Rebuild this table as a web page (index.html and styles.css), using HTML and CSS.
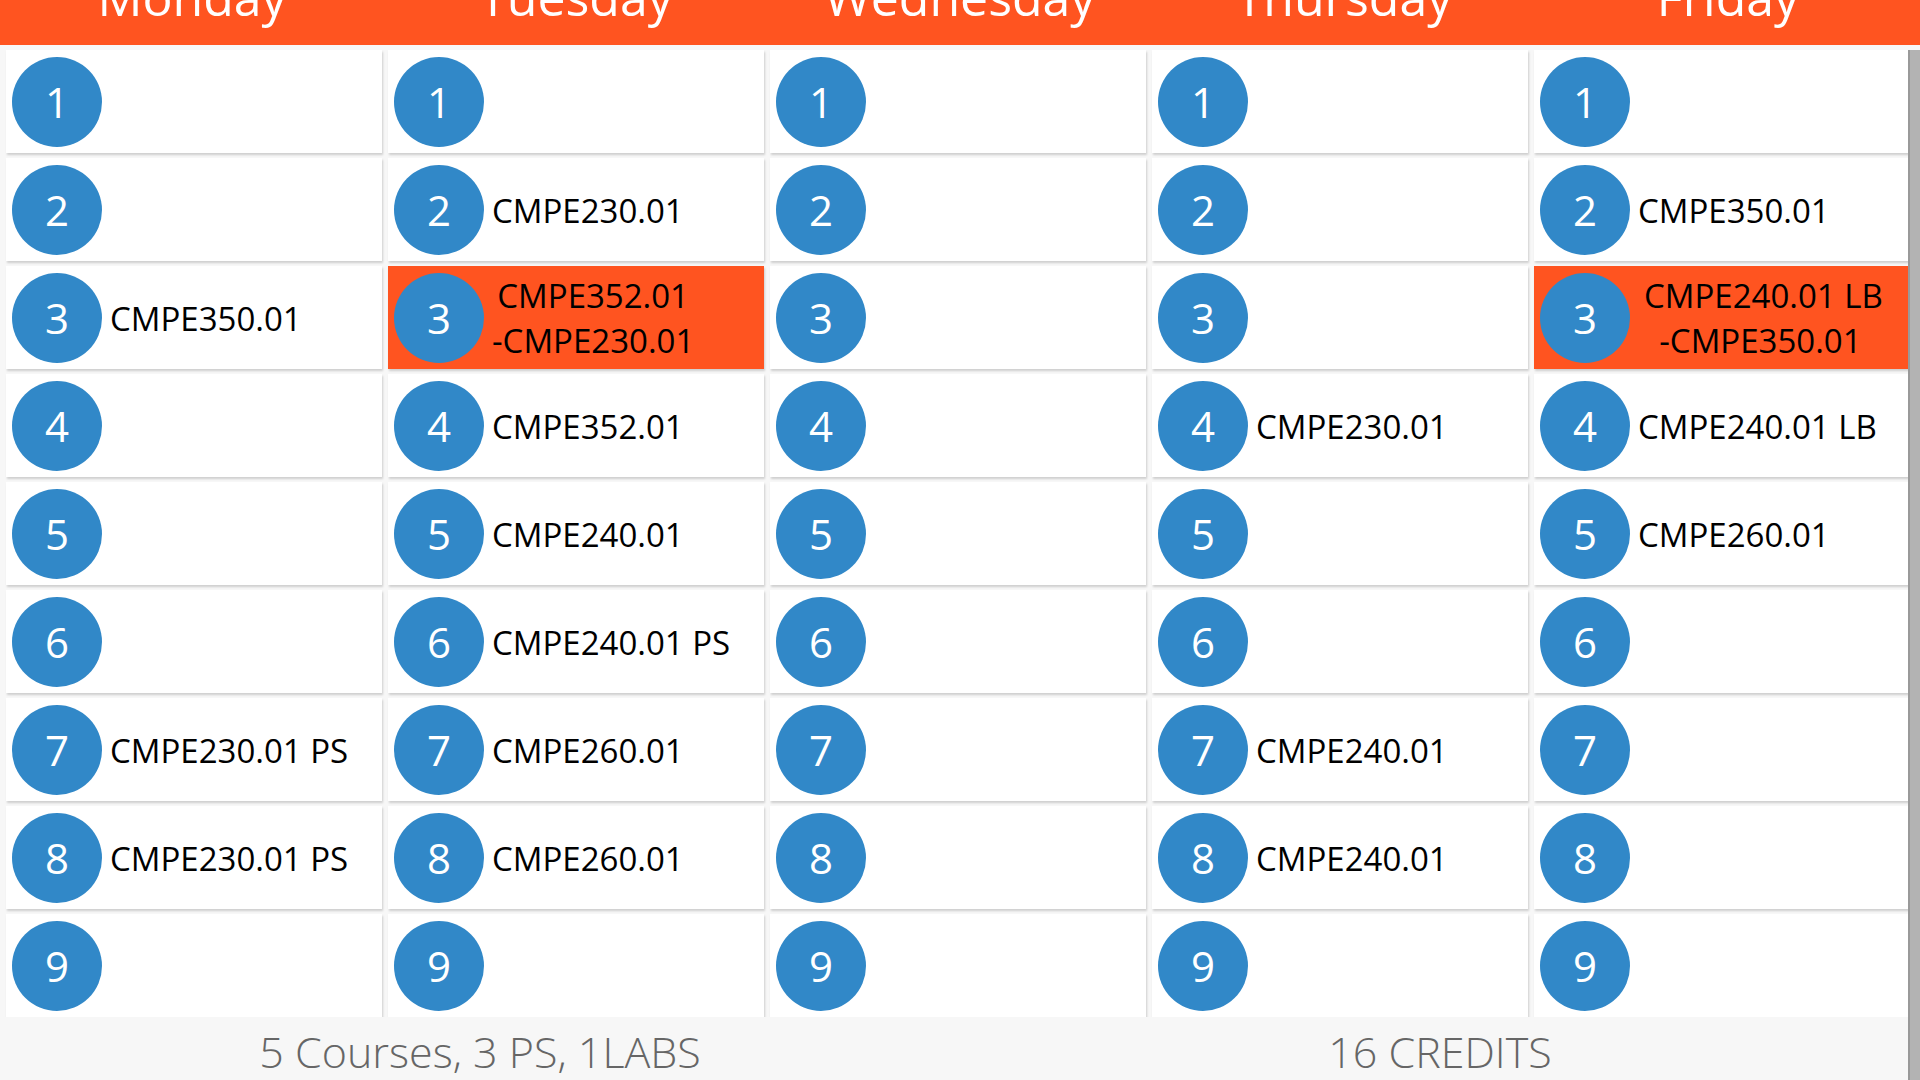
FILE: index.html
```html
<!DOCTYPE html>
<html>
<head>
<meta charset="utf-8">
<link rel="stylesheet" href="styles.css">
</head>
<body>
<div class="app">
  <div class="header">
    <div class="day">Monday</div>
    <div class="day">Tuesday</div>
    <div class="day">Wednesday</div>
    <div class="day">Thursday</div>
    <div class="day">Friday</div>
  </div>
  <div class="grid">
    <div class="col">
      <div class="cell"><span class="num">1</span></div>
      <div class="cell"><span class="num">2</span></div>
      <div class="cell"><span class="num">3</span><span class="course">CMPE350.01</span></div>
      <div class="cell"><span class="num">4</span></div>
      <div class="cell"><span class="num">5</span></div>
      <div class="cell"><span class="num">6</span></div>
      <div class="cell"><span class="num">7</span><span class="course">CMPE230.01 PS</span></div>
      <div class="cell"><span class="num">8</span><span class="course">CMPE230.01 PS</span></div>
      <div class="cell"><span class="num">9</span></div>
    </div>
    <div class="col">
      <div class="cell"><span class="num">1</span></div>
      <div class="cell"><span class="num">2</span><span class="course">CMPE230.01</span></div>
      <div class="cell conflict"><span class="num">3</span><span class="course">CMPE352.01<br>-CMPE230.01</span></div>
      <div class="cell"><span class="num">4</span><span class="course">CMPE352.01</span></div>
      <div class="cell"><span class="num">5</span><span class="course">CMPE240.01</span></div>
      <div class="cell"><span class="num">6</span><span class="course">CMPE240.01 PS</span></div>
      <div class="cell"><span class="num">7</span><span class="course">CMPE260.01</span></div>
      <div class="cell"><span class="num">8</span><span class="course">CMPE260.01</span></div>
      <div class="cell"><span class="num">9</span></div>
    </div>
    <div class="col">
      <div class="cell"><span class="num">1</span></div>
      <div class="cell"><span class="num">2</span></div>
      <div class="cell"><span class="num">3</span></div>
      <div class="cell"><span class="num">4</span></div>
      <div class="cell"><span class="num">5</span></div>
      <div class="cell"><span class="num">6</span></div>
      <div class="cell"><span class="num">7</span></div>
      <div class="cell"><span class="num">8</span></div>
      <div class="cell"><span class="num">9</span></div>
    </div>
    <div class="col">
      <div class="cell"><span class="num">1</span></div>
      <div class="cell"><span class="num">2</span></div>
      <div class="cell"><span class="num">3</span></div>
      <div class="cell"><span class="num">4</span><span class="course">CMPE230.01</span></div>
      <div class="cell"><span class="num">5</span></div>
      <div class="cell"><span class="num">6</span></div>
      <div class="cell"><span class="num">7</span><span class="course">CMPE240.01</span></div>
      <div class="cell"><span class="num">8</span><span class="course">CMPE240.01</span></div>
      <div class="cell"><span class="num">9</span></div>
    </div>
    <div class="col">
      <div class="cell"><span class="num">1</span></div>
      <div class="cell"><span class="num">2</span><span class="course">CMPE350.01</span></div>
      <div class="cell conflict"><span class="num">3</span><span class="course"><span class="lead"></span>CMPE240.01 LB<br>-CMPE350.01</span></div>
      <div class="cell"><span class="num">4</span><span class="course">CMPE240.01 LB</span></div>
      <div class="cell"><span class="num">5</span><span class="course">CMPE260.01</span></div>
      <div class="cell"><span class="num">6</span></div>
      <div class="cell"><span class="num">7</span></div>
      <div class="cell"><span class="num">8</span></div>
      <div class="cell"><span class="num">9</span></div>
    </div>
  </div>
  <div class="footer">
    <div class="stat">5 Courses, 3 PS, 1LABS</div>
    <div class="stat">16 CREDITS</div>
  </div>
  <div class="scrollbar"></div>
</div>
</body>
</html>
```
FILE: styles.css
```css
html, body {
  margin: 0;
  padding: 0;
  width: 1920px;
  height: 1080px;
  overflow: hidden;
  background: #f7f7f7;
  font-family: "Open Sans", "Noto Sans", sans-serif;
}
.app {
  position: relative;
  width: 1920px;
  height: 1080px;
  display: flex;
  flex-direction: column;
}
.header {
  flex: none;
  height: 45px;
  background: #ff5420;
  display: flex;
  overflow: hidden;
}
.day {
  flex: 1;
  text-align: center;
  color: #fff;
  font-size: 50px;
  line-height: 50px;
  margin-top: -28px;
}
.grid {
  flex: none;
  display: flex;
  gap: 6px;
  padding: 5px 0 0 6px;
  height: 967px;
}
.col {
  width: 376px;
  display: flex;
  flex-direction: column;
  gap: 5px;
}
.cell {
  height: 103px;
  background: #fff;
  display: flex;
  align-items: center;
  box-shadow: 1px 2px 2px rgba(0,0,0,0.16);
}
.cell.conflict {
  background: #ff5420;
}
.num {
  width: 90px;
  height: 90px;
  border-radius: 50%;
  background: #3188c8;
  color: #fff;
  font-size: 42px;
  display: flex;
  align-items: center;
  justify-content: center;
  margin-left: 6px;
  flex: none;
}
.course {
  margin-left: 8px;
  padding-top: 1px;
  font-size: 33px;
  color: #000;
  text-align: center;
  line-height: 45px;
  white-space: nowrap;
}
.lead {
  display: inline-block;
  width: 6px;
}
.footer {
  flex: 1;
  min-height: 0;
  overflow: hidden;
  display: flex;
  background: #f7f7f7;
}
.stat {
  flex: 1;
  text-align: center;
  color: #666;
  font-size: 43px;
  font-weight: 300;
  padding-top: 5px;
}
.scrollbar {
  position: absolute;
  right: 0;
  top: 50px;
  bottom: 0;
  width: 10px;
  background: #b3b3b3;
  border-left: 2px solid #999;
}
```
